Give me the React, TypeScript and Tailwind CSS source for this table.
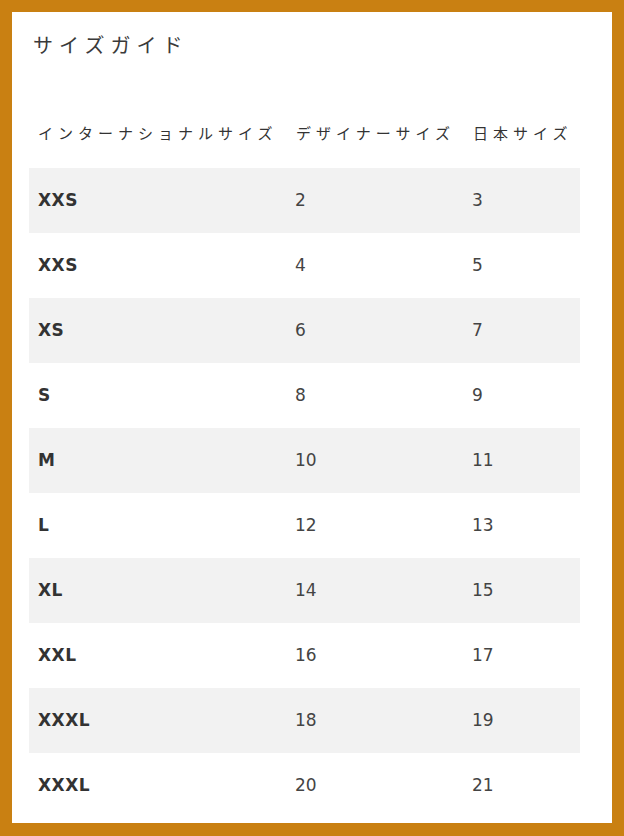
import React from 'react';

const rows = [
  ['XXS', '2', '3'],
  ['XXS', '4', '5'],
  ['XS', '6', '7'],
  ['S', '8', '9'],
  ['M', '10', '11'],
  ['L', '12', '13'],
  ['XL', '14', '15'],
  ['XXL', '16', '17'],
  ['XXXL', '18', '19'],
  ['XXXL', '20', '21'],
];

const jp = { fontFamily: '"Noto Sans CJK JP", "Noto Sans", sans-serif' };

export default function App() {
  return (
    <div className="w-[624px] h-[836px] bg-[#c98012] pt-[12px] px-[12px] pb-[13px]">
      <div className="h-full bg-white pt-[21px] pl-[17px] pr-[32px] pb-[5px] flex flex-col">
        <h1
          className="pl-[4px] text-[20px] leading-[24px] tracking-[6px] text-[#3a3a3a] font-normal"
          style={jp}
        >
          サイズガイド
        </h1>
        <table className="mt-[46px] w-[551px] table-fixed border-collapse text-[#333]" style={{ fontFamily: '"DejaVu Sans", "Liberation Sans", sans-serif' }}>
          <colgroup>
            <col className="w-[257px]" />
            <col className="w-[177px]" />
            <col className="w-[117px]" />
          </colgroup>
          <thead>
            <tr className="h-[65px]">
              <th className="pl-[9px] text-left font-normal text-[15px] tracking-[5px] whitespace-nowrap pb-[4px]" style={jp}>
                インターナショナルサイズ
              </th>
              <th className="pl-[10px] text-left font-normal text-[15px] tracking-[5px] whitespace-nowrap pb-[4px]" style={jp}>
                デザイナーサイズ
              </th>
              <th className="pl-[10px] text-left font-normal text-[15px] tracking-[5px] whitespace-nowrap pb-[4px]" style={jp}>
                日本サイズ
              </th>
            </tr>
          </thead>
          <tbody>
            {rows.map((r, i) => (
              <tr key={i} className={i % 2 === 0 ? 'h-[65px] bg-[#f2f2f2]' : 'h-[65px] bg-white'}>
                <td className="pl-[9px] text-[17px] font-bold tracking-[0.5px] text-[#333]">{r[0]}</td>
                <td className="pl-[9px] text-[17px] text-[#444]">{r[1]}</td>
                <td className="pl-[9px] text-[17px] text-[#444]">{r[2]}</td>
              </tr>
            ))}
          </tbody>
        </table>
      </div>
    </div>
  );
}
